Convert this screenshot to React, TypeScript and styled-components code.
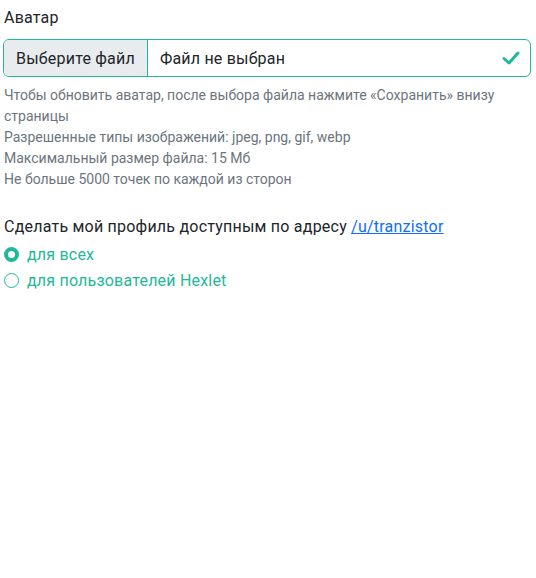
import React from "react";
import styled, { createGlobalStyle } from "styled-components";

const Global = createGlobalStyle`
  html, body { margin: 0; padding: 0; background: #fff; }
  body { font-family: Roboto, "Noto Sans", sans-serif; color: #212529; }
`;

const Page = styled.div`
  padding: 8px 5px 0 4px;
`;

const Label = styled.div`
  font-size: 16px;
  line-height: 20px;
  letter-spacing: 0.2px;
  margin-bottom: 11px;
`;

const FileInput = styled.div`
  display: flex;
  align-items: stretch;
  height: 38px;
  box-sizing: border-box;
  border: 1px solid #1fb89a;
  border-radius: 6px;
  overflow: hidden;
  margin-left: -1px;
`;

const PickButton = styled.div`
  display: flex;
  align-items: center;
  padding: 0 12px;
  background: #e9ecef;
  border-right: 1px solid #1fb89a;
  font-size: 16px;
  letter-spacing: 0.2px;
  color: #212529;
`;

const FileName = styled.div`
  flex: 1;
  display: flex;
  align-items: center;
  justify-content: space-between;
  padding: 0 10px 0 12px;
  font-size: 16px;
  letter-spacing: 0.2px;
`;

const Help = styled.div`
  margin-top: 8px;
  font-size: 14px;
  line-height: 21px;
  color: #6c757d;
`;

const Prompt = styled.div`
  margin-top: 25px;
  margin-bottom: 2px;
  font-size: 16px;
  line-height: 24px;
  letter-spacing: 0.22px;
`;

const Link = styled.a`
  color: #0d6efd;
  text-decoration: underline;
`;

const Radio = styled.label`
  display: flex;
  align-items: center;
  gap: 8px;
  height: 26px;
  font-size: 16px;
  letter-spacing: 0.2px;
  color: #1fb89a;
`;

const Circle = styled.span<{ $checked?: boolean }>`
  width: 15px;
  height: 15px;
  box-sizing: border-box;
  border-radius: 50%;
  border: ${(p) => (p.$checked ? "4.5px solid #1fb89a" : "1px solid #1fb89a")};
  background: #fff;
`;

export default function App() {
  return (
    <Page>
      <Global />
      <Label>Аватар</Label>
      <FileInput>
        <PickButton>Выберите файл</PickButton>
        <FileName>
          <span>Файл не выбран</span>
          <svg width="18" height="14" viewBox="0 0 18 14">
            <path d="M2 7.5 L7 12 L16 2" fill="none" stroke="#1fb89a" strokeWidth="3" strokeLinecap="round" strokeLinejoin="round" />
          </svg>
        </FileName>
      </FileInput>
      <Help>
        Чтобы обновить аватар, после выбора файла нажмите «Сохранить» внизу страницы
        <br />
        Разрешенные типы изображений: jpeg, png, gif, webp
        <br />
        Максимальный размер файла: 15 Мб
        <br />
        Не больше 5000 точек по каждой из сторон
      </Help>
      <Prompt>
        Сделать мой профиль доступным по адресу <Link href="#">/u/tranzistor</Link>
      </Prompt>
      <Radio>
        <Circle $checked />
        для всех
      </Radio>
      <Radio>
        <Circle />
        для пользователей Hexlet
      </Radio>
    </Page>
  );
}
